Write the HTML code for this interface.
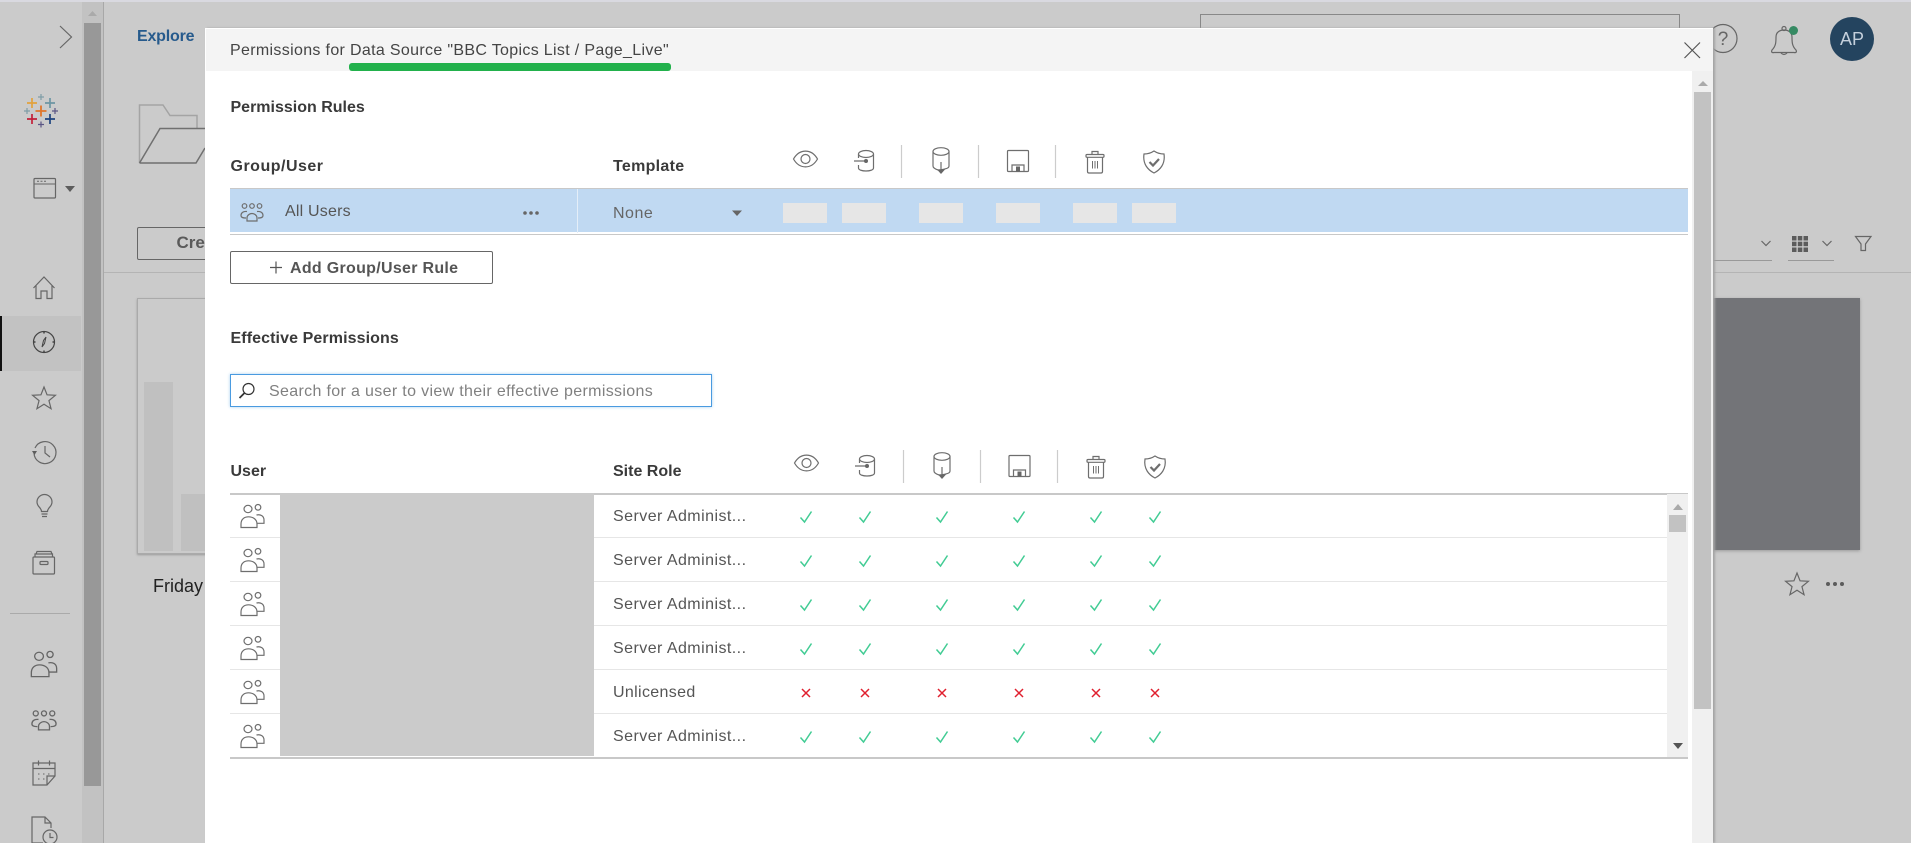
<!DOCTYPE html>
<html><head><meta charset="utf-8"><title>Permissions</title>
<style>
html,body{margin:0;padding:0;width:1911px;height:843px;overflow:hidden;background:#cbcbcb}
body{position:relative;font-family:"Liberation Sans",sans-serif}
div{position:absolute;box-sizing:border-box}
.t{position:absolute;white-space:nowrap;line-height:20px;height:20px}
svg{position:absolute;left:0;top:0;overflow:visible}
.b{font-weight:bold;font-size:16px;color:#3a3a3a}
.r{font-size:16px;color:#555;left:613px;letter-spacing:.45px}
.ln{left:230px;width:1437px;height:1px;background:#e6e6e6}
.g{background:#e6e6e6;top:203px;width:44px;height:20px}
</style></head><body>
<div style="left:0;top:0;width:1911px;height:2px;background:#d9d9e0"></div>
<div style="left:82px;top:2px;width:21px;height:841px;background:#c2c2c2"></div>
<div style="left:84px;top:23px;width:17px;height:763px;background:#989898"></div>
<div style="left:103px;top:2px;width:1px;height:841px;background:#a8a8a8"></div>
<div style="left:0;top:316px;width:81px;height:55px;background:#c2c2c2"></div>
<div style="left:0;top:316px;width:2px;height:55px;background:#111"></div>
<div style="left:10px;top:613px;width:60px;height:1px;background:#aaa"></div>
<div style="left:104px;top:272px;width:1807px;height:1px;background:#b4b4b4"></div>
<div class="t" style="left:137px;top:27px;font-size:16px;font-weight:bold;color:#265a8c;letter-spacing:-.2px">Explore</div>
<div style="left:137px;top:227px;width:120px;height:33px;border:1px solid #666;border-radius:2px"></div>
<div class="t" style="left:176.500px;top:233px;font-size:17px;font-weight:bold;color:#5a5a5a">Create</div>
<div style="left:137px;top:298px;width:100px;height:256px;border:1px solid #aaa;box-shadow:0 1px 2px #999"></div>
<div style="left:144px;top:382px;width:29px;height:169px;background:#c0c0c0"></div>
<div style="left:181px;top:494px;width:30px;height:57px;background:#c0c0c0"></div>
<div class="t" style="left:153px;top:576px;font-size:18px;color:#222">Friday</div>
<div style="left:1200px;top:14px;width:480px;height:30px;border:1px solid #888"></div>
<div style="left:1700px;top:298px;width:160px;height:252px;background:#737478;box-shadow:0 1px 3px #999"></div>
<div style="left:1713px;top:260px;width:59px;height:1px;background:#999"></div>
<div style="left:1788px;top:260px;width:46px;height:1px;background:#999"></div>
<div style="left:1830px;top:17px;width:44px;height:44px;border-radius:50%;background:#24445f"></div>
<div class="t" style="left:1830px;top:29px;width:44px;text-align:center;font-size:18px;color:#c4d0dc">AP</div>

<svg width="1911" height="843" viewBox="0 0 1911 843" fill="none" stroke="#666" stroke-width="1.200">
<defs>
<g id="eye"><path d="M-12 0C-6-10.500 6-10.500 12 0C6 10.500-6 10.500-12 0Z"/><circle r="4.500"/></g>
<g id="db"><ellipse cy="-7" rx="7.500" ry="3.500"/><path d="M7.500-7V7C7.500 11-7.500 11-7.500 7V4M-7.500-3V-7M-12 0H0"/><circle r="2" fill="#666" stroke="none"/></g>
<g id="cyl"><ellipse cy="-8.500" rx="8" ry="3.800"/><path d="M8-8.500V6C8 8 6 9-3 10M-8-8.500V6C-8 8-6 9-3 10M0 2V10"/><path d="M-4 9.500H4L0 14Z" fill="#666" stroke="none"/></g>
<g id="save"><rect x="-10.500" y="-10.500" width="21" height="21" rx="1"/><path d="M-6 10V4H6V10"/><rect x="-2" y="5.500" width="4" height="5" fill="#666" stroke="none"/></g>
<g id="trash"><rect x="-9" y="-7.500" width="18" height="2.800" rx="1"/><path d="M-3-7.500V-10.500H3V-7.500M-7.500-4.700V9.500Q-7.500 11-6 11H6Q7.500 11 7.500 9.500V-4.700"/><path d="M-2.500-1V6.500M0-1V6.500M2.500-1V6.500" stroke-width="1"/></g>
<g id="shield"><path d="M0-11C3-9 7-8 10-8C11.500 2 6 8 0 11C-6 8-11.500 2-10-8C-7-8-3-9 0-11Z"/><path d="M-4.500 0L-1 3.500L5-3" stroke-width="2.200"/></g>
<path id="ok" d="M-5.500 .5L-1.500 5L5.500-5.500" stroke="#42cc94" stroke-width="1.500" fill="none"/>
<path id="no" d="M-4-4L4 4M4-4L-4 4" stroke="#e0202f" stroke-width="1.500" fill="none"/>
<g id="user"><ellipse cx="-4.500" cy="-7" rx="4" ry="3.700"/><circle cx="5.500" cy="-8.700" r="2.800"/><path d="M-11.500 11.500V8C-11.500 3-8 .8-4 .8C0 .8 4.500 3 4.500 8V11.500Z"/><path d="M4-1C8-2 11.500 0 11.500 4V7.300H5"/></g>
<g id="group"><circle cx="-7.500" cy="-6" r="2.300"/><circle cy="-6" r="2.300"/><circle cx="7.500" cy="-6" r="2.300"/><path d="M-5 9V6C-5 3-2 1.500 0 1.500C2 1.500 5 3 5 6V9Z"/><path d="M-5-.5C-9-1-11 1-11 3.500C-11 5-10 6-6 6M5-.5C9-1 11 1 11 3.500C11 5 10 6 6 6"/></g>
<path id="star" d="M0-12L3.060-4.200L11.400-3.700L4.950 1.600L7.050 9.700L0 5.200L-7.050 9.700L-4.950 1.600L-11.400-3.700L-3.060-4.200Z"/>
<path id="chev" d="M-4.500-2L0 2.500L4.500-2"/>
</defs>
<path d="M60 26L71.500 37L60 48"/>
<path d="M139.500 163V105H163L170 115.500H197V128" stroke="#a4a4a4" stroke-width="1.500"/>
<path d="M139.500 163L160 128.500H210M139.500 163H196L205 148" stroke="#707070" stroke-width="1.500"/>
<!-- tableau logo -->
<g fill="none">
<path d="M27 103H37M32 98V108" stroke="#e2a23e" stroke-width="1.700"/>
<path d="M45 103H55M50 98V108" stroke="#6c96a4" stroke-width="1.700"/>
<path d="M38 97H44M41 94V100" stroke="#7f9da7" stroke-width="1.200"/>
<path d="M35.500 111H46.500M41 105.500V116.500" stroke="#e0762b" stroke-width="1.800"/>
<path d="M24 111H30M27 108V114" stroke="#7f9da7" stroke-width="1.200"/>
<path d="M52 111H58M55 108V114" stroke="#5b5685" stroke-width="1.200"/>
<path d="M27 119H37M32 114V124" stroke="#c22039" stroke-width="1.700"/>
<path d="M45 119H55M50 114V124" stroke="#1f447e" stroke-width="1.700"/>
<path d="M38 124.500H44M41 121.500V127.500" stroke="#5b5685" stroke-width="1.200"/>
</g>
<!-- window -->
<rect x="34" y="178.500" width="21.500" height="19.500" rx="1"/><path d="M34 184H55.500M37 181.200H39M40.500 181.200H42.500M44 181.200H46" stroke-width="1"/>
<path d="M65 186H75L70 192Z" fill="#5c5c5c" stroke="none"/>
<!-- home -->
<g transform="translate(44 288)"><path d="M-10.500 0L0-11L10.500 0M-8-2.500V10.500H-3V3H3V10.500H8V-2.500"/></g>
<!-- compass -->
<g transform="translate(44 342)" stroke="#444"><circle r="10.500"/><path d="M0-11V-8.500M0 11V8.500M-11 0H-8.500M11 0H8.500" stroke-width="1.500"/><path d="M2-5L.5 1.500L-2 5L-.5-1.500Z" stroke-width="1"/></g>
<use href="#star" x="44" y="399"/>
<!-- history -->
<g transform="translate(45 452)"><path d="M-10-4A11 11 0 1 1-11 1"/><path d="M-13-1H-8L-10.500 3Z" fill="#5c5c5c" stroke="none"/><path d="M0-6V1L5 5"/></g>
<!-- bulb -->
<g transform="translate(44.500 508)"><path d="M-3 3.500C-3-.5-7.500-1-7.500-6A7.500 7.500 0 0 1 7.500-6C7.500-1 3-.5 3 3.500ZM-3 6H3M-2.500 8.500H2.500"/></g>
<!-- box -->
<g transform="translate(44 563)"><rect x="-11" y="-6" width="21.500" height="17" rx="1"/><path d="M-9-6V-9H8.500V-6M-8-9L-7-11.500H7L8-9"/><rect x="-4" y="-1.500" width="8" height="3" rx="1"/></g>
<use href="#user" transform="translate(44 664) scale(1.100)"/>
<use href="#group" transform="translate(44 720) scale(1.100)"/>
<!-- schedule -->
<g transform="translate(44 773)"><path d="M-11-10H11V3L3 12H-11Z"/><path d="M11 3H3V12M-11-4.500H11M-5.500-12.500V-7.500M5.500-12.500V-7.500"/><path d="M-6 1H-4.500M-1 1H.5M4 1H5.500M-6 6H-4.500M-1 6H.5" stroke-width="1"/></g>
<!-- doc clock -->
<g transform="translate(44 830)"><path d="M-1 13H-12V-13H1L7-7V-2M1-13V-7H7"/><circle cx="6" cy="7" r="7"/><path d="M6 3V7.500H9.500"/></g>
<path d="M88 16H97L92.500 11Z" fill="#aaa" stroke="none"/>
<!-- top right -->
<g transform="translate(1723 38.500)"><circle r="14"/></g>
<text x="1723" y="45" font-size="19" text-anchor="middle" fill="#666" stroke="none" font-family="Liberation Sans">?</text>
<g transform="translate(1784 40)"><circle cy="-11.500" r="2"/><path d="M-12 10C-8 6-8 2-8-3C-8-8-4-10 0-10C4-10 8-8 8-3C8 2 8 6 12 10C13 12 12 13 10 12.500H-10C-12 13-13 12-12 10ZM-3 13Q0 16 3 13"/></g>
<circle cx="1793.500" cy="30.500" r="4.500" fill="#368a63" stroke="none"/>
<use href="#chev" x="1766" y="243"/><use href="#chev" x="1827" y="243"/>
<g fill="#5c5c5c" stroke="none"><rect x="1792" y="236" width="4.500" height="4.500"/><rect x="1797.800" y="236" width="4.500" height="4.500"/><rect x="1803.500" y="236" width="4.500" height="4.500"/><rect x="1792" y="241.700" width="4.500" height="4.500"/><rect x="1797.800" y="241.700" width="4.500" height="4.500"/><rect x="1803.500" y="241.700" width="4.500" height="4.500"/><rect x="1792" y="247.500" width="4.500" height="4.500"/><rect x="1797.800" y="247.500" width="4.500" height="4.500"/><rect x="1803.500" y="247.500" width="4.500" height="4.500"/></g>
<path d="M1855.500 236.500H1871L1865.500 244V250.500H1861V244Z"/>
<use href="#star" x="1797" y="585"/>
<g fill="#5c5c5c" stroke="none"><circle cx="1828" cy="584" r="2"/><circle cx="1835" cy="584" r="2"/><circle cx="1842" cy="584" r="2"/></g>
</svg>

<!-- modal -->
<div style="left:205px;top:28px;width:1508px;height:815px;background:#fff;box-shadow:2px 0 2px #a4a4a4"></div>
<div style="left:206px;top:29px;width:1507px;height:42px;background:#f4f4f4"></div>
<div style="left:1692px;top:71px;width:21px;height:772px;background:#f0f0f0"></div>
<div style="left:1694px;top:92px;width:17px;height:617px;background:#c2c2c2"></div>
<div class="t" style="left:230px;top:41px;font-size:16px;color:#444;letter-spacing:.33px">Permissions for Data Source "BBC Topics List / Page_Live"</div>
<div style="left:349px;top:63px;width:322px;height:8px;background:#22b14c;border-radius:3px"></div>
<div class="t b" style="left:230.500px;top:98px">Permission Rules</div>
<div class="t b" style="left:230.500px;top:157px;letter-spacing:.5px">Group/User</div>
<div class="t b" style="left:613px;top:157px;letter-spacing:.3px">Template</div>

<div style="left:230px;top:188px;width:1458px;height:1px;background:#c8c8c8"></div>
<div style="left:230px;top:189px;width:1458px;height:43px;background:#c0d9f2"></div>
<div style="left:577px;top:189px;width:1px;height:44px;background:#e4eef8"></div>
<div style="left:230px;top:234px;width:1458px;height:1px;background:#c8c8c8"></div>
<div class="t" style="left:285px;top:202px;font-size:16px;color:#555;letter-spacing:.2px">All Users</div>
<div class="t" style="left:613px;top:204px;font-size:16px;color:#666;letter-spacing:.5px">None</div>
<div class="g" style="left:783px"></div><div class="g" style="left:842px"></div><div class="g" style="left:919px"></div><div class="g" style="left:996px"></div><div class="g" style="left:1073px"></div><div class="g" style="left:1132px"></div>

<div style="left:230px;top:251px;width:263px;height:33px;border:1px solid #666;border-radius:2px"></div>
<div class="t" style="left:290px;top:259px;font-size:16px;font-weight:bold;color:#555;letter-spacing:.3px">Add Group/User Rule</div>

<div class="t b" style="left:230.500px;top:329px;letter-spacing:.1px">Effective Permissions</div>
<div style="left:230px;top:374px;width:482px;height:33px;border:1px solid #4a9be0;box-shadow:0 0 3px #a8d0f0;background:#fff"></div>
<div class="t" style="left:269px;top:382px;font-size:16px;color:#808080;letter-spacing:.34px">Search for a user to view their effective permissions</div>

<div class="t b" style="left:230.500px;top:462px">User</div>
<div class="t b" style="left:613px;top:462px">Site Role</div>
<div style="left:230px;top:493px;width:1458px;height:1.500px;background:#c8c8c8"></div>
<div class="ln" style="top:537px"></div><div class="ln" style="top:581px"></div><div class="ln" style="top:625px"></div><div class="ln" style="top:669px"></div><div class="ln" style="top:713px"></div>
<div style="left:230px;top:757px;width:1458px;height:1.500px;background:#c8c8c8"></div>
<div style="left:280px;top:493px;width:314px;height:263px;background:#cbcbcb"></div>
<div style="left:1667px;top:494px;width:21px;height:263px;background:#f0f0f0"></div>
<div style="left:1669px;top:515px;width:17px;height:17px;background:#c2c2c2"></div>

<div class="t r" style="top:507px">Server Administ...</div>
<div class="t r" style="top:551px">Server Administ...</div>
<div class="t r" style="top:595px">Server Administ...</div>
<div class="t r" style="top:639px">Server Administ...</div>
<div class="t r" style="top:683px;letter-spacing:.35px">Unlicensed</div>
<div class="t r" style="top:727px">Server Administ...</div>

<svg width="1911" height="843" viewBox="0 0 1911 843" fill="none" stroke="#6e6e6e" stroke-width="1.200">
<path d="M1698 86H1708L1703 81Z" fill="#aaa" stroke="none"/>
<path d="M1684.500 42.500L1700 58M1700 42.500L1684.500 58" stroke="#555"/>
<path d="M732 210.500H742L737 216Z" fill="#666" stroke="none"/>
<g fill="#666" stroke="none"><circle cx="525" cy="213" r="1.800"/><circle cx="531" cy="213" r="1.800"/><circle cx="537" cy="213" r="1.800"/></g>
<use href="#group" x="252" y="212"/>
<path d="M276 261.500V273.500M270 267.500H282" stroke="#555"/>
<circle cx="248.500" cy="389" r="5.500" stroke="#333"/><path d="M244.500 393L239.500 398" stroke="#333" stroke-width="1.800"/>
<!-- header icons row 1 -->
<use href="#eye" x="805.500" y="159"/><use href="#db" x="866" y="161"/><use href="#cyl" x="941" y="160"/><use href="#save" x="1018" y="161"/><use href="#trash" x="1095" y="162"/><use href="#shield" x="1154" y="162"/>
<path d="M901.500 145V178M978.500 145V178M1055.500 145V178" stroke="#ccc"/>
<!-- header icons row 2 -->
<use href="#eye" x="806.500" y="463"/><use href="#db" x="867" y="466"/><use href="#cyl" x="942" y="465"/><use href="#save" x="1019.500" y="466"/><use href="#trash" x="1096" y="467"/><use href="#shield" x="1155" y="467"/>
<path d="M903.500 450V483M980.500 450V483M1057.500 450V483" stroke="#ccc"/>
<use href="#user" x="252.500" y="516"/><use href="#user" x="252.500" y="560"/><use href="#user" x="252.500" y="604"/><use href="#user" x="252.500" y="648"/><use href="#user" x="252.500" y="692"/><use href="#user" x="252.500" y="736"/>
<use href="#ok" x="806" y="517"/><use href="#ok" x="865" y="517"/><use href="#ok" x="942" y="517"/><use href="#ok" x="1019" y="517"/><use href="#ok" x="1096" y="517"/><use href="#ok" x="1155" y="517"/>
<use href="#ok" x="806" y="561"/><use href="#ok" x="865" y="561"/><use href="#ok" x="942" y="561"/><use href="#ok" x="1019" y="561"/><use href="#ok" x="1096" y="561"/><use href="#ok" x="1155" y="561"/>
<use href="#ok" x="806" y="605"/><use href="#ok" x="865" y="605"/><use href="#ok" x="942" y="605"/><use href="#ok" x="1019" y="605"/><use href="#ok" x="1096" y="605"/><use href="#ok" x="1155" y="605"/>
<use href="#ok" x="806" y="649"/><use href="#ok" x="865" y="649"/><use href="#ok" x="942" y="649"/><use href="#ok" x="1019" y="649"/><use href="#ok" x="1096" y="649"/><use href="#ok" x="1155" y="649"/>
<use href="#no" x="806" y="693"/><use href="#no" x="865" y="693"/><use href="#no" x="942" y="693"/><use href="#no" x="1019" y="693"/><use href="#no" x="1096" y="693"/><use href="#no" x="1155" y="693"/>
<use href="#ok" x="806" y="737"/><use href="#ok" x="865" y="737"/><use href="#ok" x="942" y="737"/><use href="#ok" x="1019" y="737"/><use href="#ok" x="1096" y="737"/><use href="#ok" x="1155" y="737"/>
<path d="M1673 510H1683L1678 504Z" fill="#aaa" stroke="none"/>
<path d="M1673 743H1683L1678 749Z" fill="#555" stroke="none"/>
</svg>
</body></html>
